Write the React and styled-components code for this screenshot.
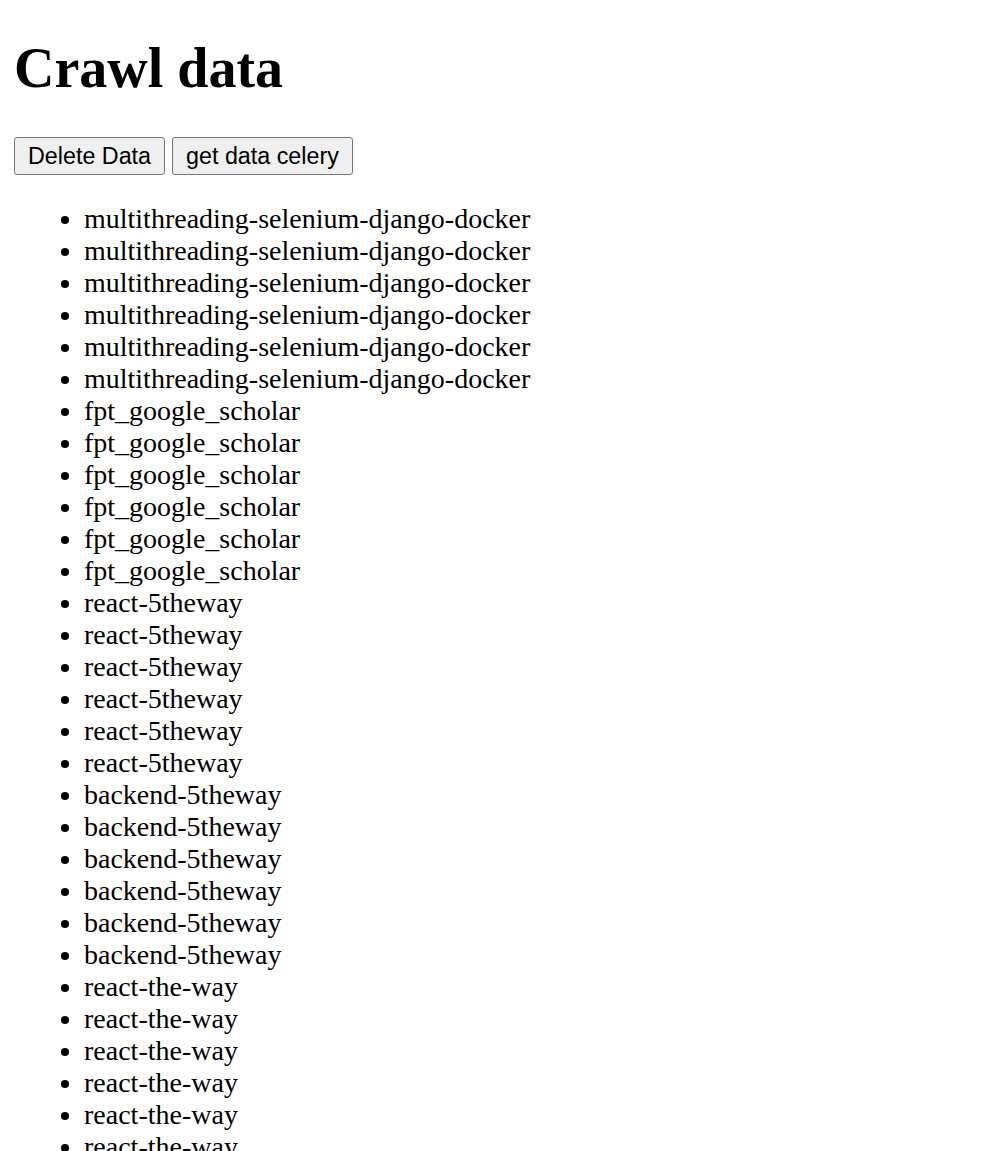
import React from 'react';
import styled, { createGlobalStyle } from 'styled-components';

const GlobalStyle = createGlobalStyle`
    html, body {
        background: #ffffff;
    }
    body {
        margin: 14px;
        font-family: "Liberation Serif", "Times New Roman", serif;
        color: #000000;
    }
`

const Title = styled.h1`
    font-size: 56px;
    font-weight: bold;
    margin: 21.5px 0 37.5px;
    line-height: normal;
`

const Toolbar = styled.div`
    display: flex;
    gap: 7px;
    align-items: center;
`

const Button = styled.button`
    font-family: "Liberation Sans", Arial, sans-serif;
    font-size: 23.3px;
    line-height: normal;
    color: #000000;
    background: #efefef;
    border: 1px solid #767676;
    border-radius: 3px;
    padding: 2px 13px;
    height: 38px;
    cursor: pointer;
    &:hover {
        background: #e5e5e5;
    }
`

const List = styled.ul`
    margin: 28px 0;
    padding-left: 70px;
    font-size: 28px;
    line-height: normal;
    list-style: disc;
`

const Item = styled.li`
    line-height: 32px;
`

const repos = [
    'multithreading-selenium-django-docker',
    'fpt_google_scholar',
    'react-5theway',
    'backend-5theway',
    'react-the-way',
]

const items = repos.flatMap((name) => Array.from({ length: 6 }, () => name))

const App = () => (
    <>
        <GlobalStyle />
        <Title>Crawl data</Title>
        <Toolbar>
            <Button>Delete Data</Button>
            <Button>get data celery</Button>
        </Toolbar>
        <List>
            {items.map((name, i) => (
                <Item key={i}>{name}</Item>
            ))}
        </List>
    </>
)

export default App
